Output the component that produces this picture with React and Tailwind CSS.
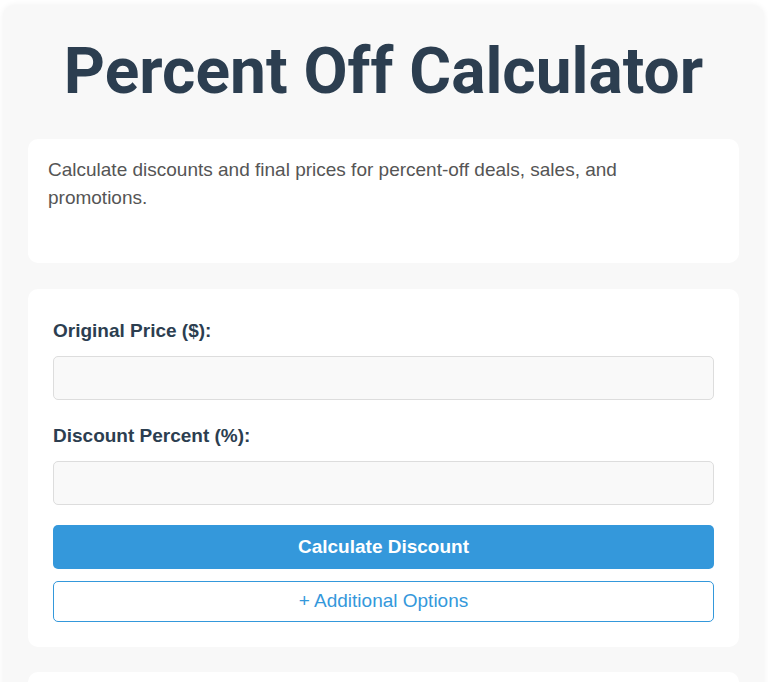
export default function App() {
  return (
    <div className="min-h-screen bg-white" style={{ fontFamily: '"Liberation Sans", Arial, sans-serif' }}>
      <div className="ml-[3px] mr-[4px] mt-[5px] rounded-[12px] bg-[#f8f8f8] px-[25px] pb-[25px] shadow-[0_0_6px_rgba(0,0,0,0.06)]">
        <h1
          className="pt-[29px] pb-[30px] text-center text-[64px] font-bold leading-[75px] text-[#2c3e50]"
          style={{ fontFamily: 'Roboto, "Liberation Sans", sans-serif' }}
        >
          Percent Off Calculator
        </h1>

        <div className="rounded-[10px] bg-white px-[20px] pt-[17px] pb-[51px]">
          <p className="text-[19px] leading-[28px] text-[#555]">
            Calculate discounts and final prices for percent-off deals, sales, and promotions.
          </p>
        </div>

        <div className="mt-[26px] rounded-[10px] bg-white px-[25px] pt-[32px] pb-[25px]">
          <label className="mb-[15px] block text-[19px] font-bold leading-[20px] text-[#2c3e50]">
            Original Price ($):
          </label>
          <input
            type="text"
            className="block h-[44px] w-full rounded-[5px] border border-[#ddd] bg-[#f9f9f9] px-3 outline-none"
          />

          <label className="mt-[26px] mb-[15px] block text-[19px] font-bold leading-[20px] text-[#2c3e50]">
            Discount Percent (%):
          </label>
          <input
            type="text"
            className="block h-[44px] w-full rounded-[5px] border border-[#ddd] bg-[#f9f9f9] px-3 outline-none"
          />

          <button className="mt-[20px] block h-[44px] w-full rounded-[5px] bg-[#3498db] text-[19px] font-bold text-white">
            Calculate Discount
          </button>
          <button className="mt-[12px] block h-[41px] w-full rounded-[5px] border border-[#3498db] bg-white text-[19px] text-[#3498db]">
            + Additional Options
          </button>
        </div>

        <div className="mt-[25px] h-[120px] rounded-[10px] bg-white" />
      </div>
    </div>
  );
}
